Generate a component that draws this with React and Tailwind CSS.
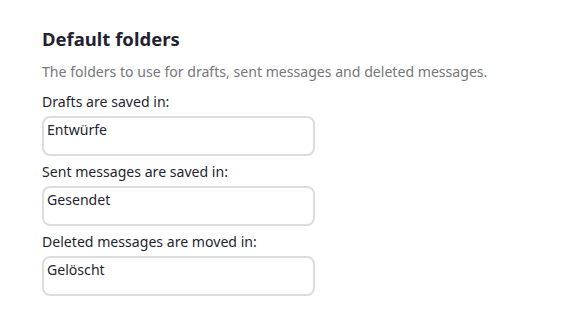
import React from "react";

const folders = [
  { label: "Drafts are saved in:", value: "Entwürfe" },
  { label: "Sent messages are saved in:", value: "Gesendet" },
  { label: "Deleted messages are moved in:", value: "Gelöscht" },
];

export default function App() {
  return (
    <div
      className="w-[579px] h-[335px] bg-white pl-[42px] pt-[27px]"
      style={{ fontFamily: '"Noto Sans", sans-serif' }}
    >
      <h2 className="text-[18.5px] leading-[24px] font-bold text-[#241f31]">Default folders</h2>
      <p className="mt-[11px] text-[14.1px] leading-[20px] text-[#77767b]">
        The folders to use for drafts, sent messages and deleted messages.
      </p>
      <div className="mt-[10px] flex flex-col gap-[6px] w-[273px]">
        {folders.map((f) => (
          <div key={f.label}>
            <label className="block text-[14.1px] leading-[20px] text-[#241f31]">{f.label}</label>
            <div className="mt-[4px] h-[40px] rounded-[8px] border-2 border-[#dcdcdc] px-[3px] pt-[2px] text-[14.1px] leading-[20px] text-[#241f31]">
              {f.value}
            </div>
          </div>
        ))}
      </div>
    </div>
  );
}
